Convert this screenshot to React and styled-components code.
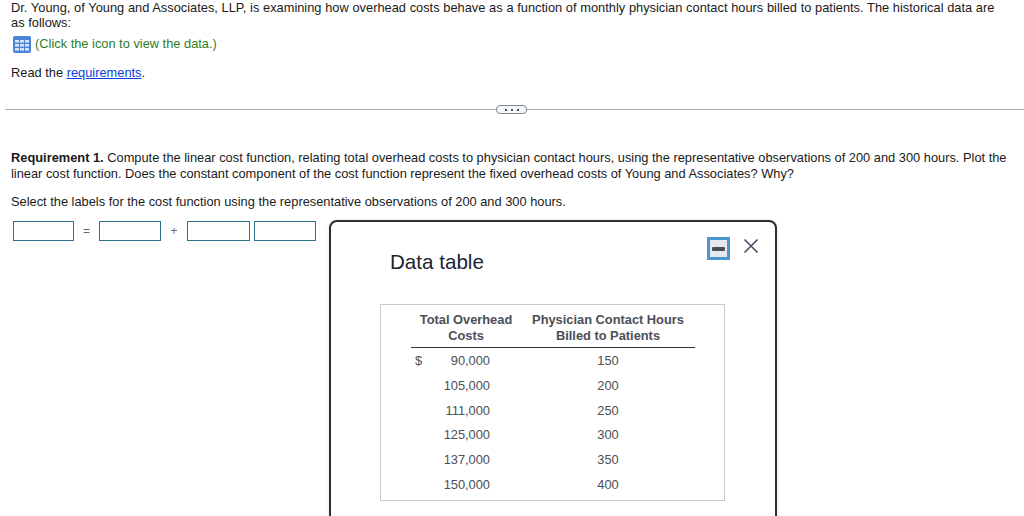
import React from 'react';
import styled, { createGlobalStyle } from 'styled-components';

const GlobalStyle = createGlobalStyle`
  html, body {
    margin: 0;
    padding: 0;
    background: #fff;
    overflow: hidden;
  }
  body {
    font-family: "Liberation Sans", Arial, sans-serif;
    color: #1a1a1a;
  }
`;

const Page = styled.div`
  position: relative;
  width: 1024px;
  height: 516px;
  overflow: hidden;
`;

const Intro = styled.section`
  padding: 0 24px 0 11px;
  height: 105px;
  box-sizing: border-box;
`;

const Text = styled.p`
  margin: ${(p) => p.$margin || 0};
  font-size: 12.84px;
  line-height: ${(p) => p.$leading || 16}px;
  word-spacing: ${(p) => p.$wordSpacing || 0}px;
`;

const DataHint = styled.div`
  display: flex;
  align-items: flex-start;
  gap: 4px;
  margin: 5px 0 0 2px;
  height: 18px;
  font-size: 12.84px;
  line-height: 18px;
  color: #2f7d1e;
  svg {
    margin-top: 1px;
  }
`;

const Requirements = styled.a`
  color: #0a3ee0;
  text-decoration: underline;
`;

const DividerRow = styled.div`
  display: flex;
  align-items: center;
  height: 9px;
  padding-left: 5px;
`;

const Rule = styled.div`
  flex: ${(p) => (p.$width ? `0 0 ${p.$width}px` : 1)};
  height: 1px;
  background: #a9adb5;
`;

const MoreButton = styled.div`
  width: 31px;
  height: 9px;
  box-sizing: border-box;
  border: 1px solid #7d8794;
  border-radius: 4px;
  background: #f6f7f9;
  display: flex;
  align-items: center;
  justify-content: center;
  gap: 4px;
`;

const Dot = styled.span`
  width: 2px;
  height: 2px;
  background: #4b5563;
`;

const Requirement = styled.section`
  padding: 36px 11px 0;
`;

const Blanks = styled.div`
  display: flex;
  align-items: center;
  margin: 11px 0 0 2px;
`;

const Blank = styled.div`
  width: ${(p) => p.$width}px;
  height: 20px;
  box-sizing: border-box;
  border: 1px solid #2f7391;
  background: #fff;
  margin-right: ${(p) => p.$gap || 0}px;
`;

const Operator = styled.span`
  width: ${(p) => p.$width}px;
  text-align: center;
  font-size: 12px;
  color: #666;
`;

const Modal = styled.div`
  position: absolute;
  left: 329px;
  top: 220px;
  width: 448px;
  height: 320px;
  box-sizing: border-box;
  border: 2px solid #2e2e2e;
  border-radius: 8px;
  background: #fff;
  box-shadow: 0 0 3px rgba(0, 0, 0, 0.15);
`;

const ModalHeader = styled.header`
  display: flex;
  justify-content: space-between;
  align-items: flex-start;
  padding: 15px 16px 0 59px;
  height: 82px;
  box-sizing: border-box;
`;

const ModalTitle = styled.h2`
  margin: 13px 0 0;
  font-size: 20.6px;
  font-weight: 400;
  line-height: 24px;
  color: #1c2330;
`;

const ModalActions = styled.div`
  display: flex;
  align-items: flex-start;
  gap: 13px;
  svg {
    margin-top: 1px;
  }
`;

const MinimizeButton = styled.div`
  width: 23px;
  height: 23px;
  box-sizing: border-box;
  border: 3px solid #4a97cf;
  background: #e6e8ec;
  display: flex;
  align-items: center;
  justify-content: center;
`;

const MinimizeBar = styled.span`
  width: 13px;
  height: 4px;
  border-radius: 1px;
  background: #4a4f57;
`;

const DataFrame = styled.div`
  margin-left: 49px;
  width: 345px;
  height: 197px;
  box-sizing: border-box;
  border: 1px solid #c9c9c9;
  padding: 7px 29px 0 30px;
`;

const DataTable = styled.table`
  width: 100%;
  border-collapse: collapse;
  table-layout: fixed;
  font-size: 12.84px;
  color: #4b4f57;
`;

const HeadCell = styled.th`
  padding: 0 0 3px;
  line-height: 16px;
  font-weight: 700;
  text-align: center;
  white-space: nowrap;
  border-bottom: 1px solid #333;
  width: ${(p) => (p.$width ? `${p.$width}px` : 'auto')};
`;

const Cell = styled.td`
  height: 23.7px;
  padding: 1px 0 0;
  text-align: center;
`;

const MoneyCell = styled(Cell)`
  position: relative;
  text-align: right;
  padding-right: 31px;
`;

const Dollar = styled.span`
  position: absolute;
  left: 4px;
  top: 5px;
`;

const rows = [
  ['90,000', '150'],
  ['105,000', '200'],
  ['111,000', '250'],
  ['125,000', '300'],
  ['137,000', '350'],
  ['150,000', '400'],
];

const GridIcon = () => (
  <svg width="18" height="17" viewBox="0 0 18 17">
    <rect x="0" y="0" width="18" height="17" rx="2" fill="#4a86d8" />
    {[4, 8, 12].map((y) =>
      [2, 7, 12].map((x) => (
        <rect key={`${x}-${y}`} x={x} y={y} width="4" height="2.6" fill="#d5e3f7" />
      )),
    )}
  </svg>
);

const CloseIcon = () => (
  <svg width="16" height="16" viewBox="0 0 16 16">
    <path d="M1.5 1.5 L14.5 14.5 M14.5 1.5 L1.5 14.5" stroke="#4a5563" strokeWidth="1.7" fill="none" />
  </svg>
);

const App = () => (
  <Page>
    <GlobalStyle />
    <Intro>
      <Text $leading={15} $wordSpacing={0.15}>
        Dr. Young, of Young and Associates, LLP, is examining how overhead costs behave as a function of monthly physician contact hours billed to patients. The historical data are as follows:
      </Text>
      <DataHint>
        <GridIcon />
        (Click the icon to view the data.)
      </DataHint>
      <Text $margin="12px 0 0" $leading={15}>
        Read the <Requirements>requirements</Requirements>.
      </Text>
    </Intro>
    <DividerRow>
      <Rule $width={491} />
      <MoreButton>
        <Dot />
        <Dot />
        <Dot />
      </MoreButton>
      <Rule />
    </DividerRow>
    <Requirement>
      <Text>
        <b>Requirement 1.</b> Compute the linear cost function, relating total overhead costs to physician contact hours, using the representative observations of 200 and 300 hours. Plot the linear cost function. Does the constant component of the cost function represent the fixed overhead costs of Young and Associates? Why?
      </Text>
      <Text $margin="12px 0 0">
        Select the labels for the cost function using the representative observations of 200 and 300 hours.
      </Text>
      <Blanks>
        <Blank $width={61} />
        <Operator $width={25}>=</Operator>
        <Blank $width={62} />
        <Operator $width={26}>+</Operator>
        <Blank $width={63} $gap={4} />
        <Blank $width={62} />
      </Blanks>
    </Requirement>
    <Modal>
      <ModalHeader>
        <ModalTitle>Data table</ModalTitle>
        <ModalActions>
          <MinimizeButton>
            <MinimizeBar />
          </MinimizeButton>
          <CloseIcon />
        </ModalActions>
      </ModalHeader>
      <DataFrame>
        <DataTable>
          <thead>
            <tr>
              <HeadCell $width={110}>
                Total Overhead
                <br />
                Costs
              </HeadCell>
              <HeadCell>
                Physician Contact Hours
                <br />
                Billed to Patients
              </HeadCell>
            </tr>
          </thead>
          <tbody>
            {rows.map(([cost, hours], i) => (
              <tr key={hours}>
                <MoneyCell>
                  {i === 0 && <Dollar>$</Dollar>}
                  {cost}
                </MoneyCell>
                <Cell>{hours}</Cell>
              </tr>
            ))}
          </tbody>
        </DataTable>
      </DataFrame>
    </Modal>
  </Page>
);

export default App;
